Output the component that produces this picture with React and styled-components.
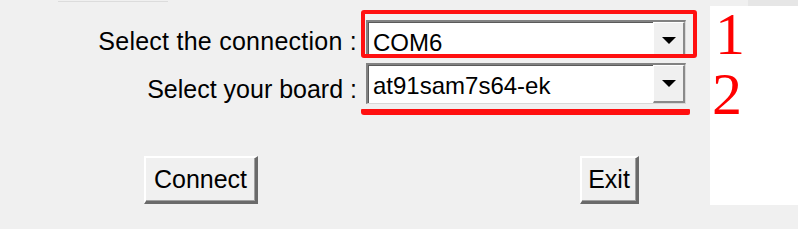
import React from 'react';
import styled, { createGlobalStyle } from 'styled-components';

const Global = createGlobalStyle`
    html, body { margin: 0; padding: 0; background: #f0f0f0; }
    body { width: 798px; height: 229px; overflow: hidden; }
`

const Screen = styled.div`
    display: flex;
    width: 798px;
    height: 229px;
    background: #f0f0f0;
    font-family: "Liberation Sans", Arial, sans-serif;
    color: #000;
`

const Dialog = styled.div`
    width: 710px;
    display: flex;
    flex-direction: column;
    position: relative;
    .topline{
        position: absolute;
        left: 58px;
        top: 1px;
        width: 110px;
        height: 1px;
        background: #dcdcdc;
    }
`

const Row = styled.div`
    display: grid;
    grid-template-columns: 357px auto;
    align-items: center;
    margin-top: ${props => props.top}px;
`

const Label = styled.label`
    font-size: 25px;
    text-align: right;
    letter-spacing: ${props => props.spacing || 0}px;
    padding-top: ${props => props.shift || 0}px;
`

const Highlight = styled.div`
    margin-left: 4px;
    width: 336px;
    height: 48px;
    box-sizing: border-box;
    border: 4px solid #ff1010;
    border-radius: 3px;
    padding: 6px 7px 0 1px;
    overflow: hidden;
`

const Field = styled.div`
    display: flex;
    flex-direction: column;
`

const Combo = styled.div`
    width: 320px;
    height: 41px;
    flex-shrink: 0;
    margin-left: ${props => props.offset || 0}px;
    box-sizing: border-box;
    display: flex;
    background: #fff;
    border-top: 2px solid #828282;
    border-left: 2px solid #828282;
    border-right: 1px solid #d8d8d8;
    border-bottom: 1px solid #d8d8d8;
    box-shadow: inset 1px 1px 0 #5a5a5a;
    .value{
        flex: 1;
        font-size: 24px;
        padding: 4px 0 0 5px;
        display: flex;
        align-items: center;
    }
`

const DropButton = styled.div`
    width: 32px;
    box-sizing: border-box;
    background: #f0f0f0;
    border-right: 2px solid #8a8a8a;
    border-bottom: 2px solid #8a8a8a;
    border-top: 1px solid #fff;
    border-left: 1px solid #fff;
    display: flex;
    align-items: center;
    justify-content: center;
    &::after{
        content: '';
        border-left: 7px solid transparent;
        border-right: 7px solid transparent;
        border-top: 7px solid #000;
        margin-left: 1px;
    }
`

const Underline = styled.div`
    margin-left: 4px;
    margin-top: 5px;
    width: 329px;
    height: 6px;
    background: #ff1010;
    border-radius: 1px 1px 2px 3px;
`

const Buttons = styled.div`
    display: flex;
    margin-top: 41px;
    padding-left: 144px;
`

const Button = styled.button`
    width: ${props => props.w}px;
    height: 48px;
    margin-left: ${props => props.gap || 0}px;
    box-sizing: border-box;
    background: #f0f0f0;
    font-family: "Liberation Sans", Arial, sans-serif;
    font-size: 25px;
    color: #000;
    padding: 0;
    border-top: 2px solid #fff;
    border-left: 2px solid #fff;
    border-right: 3px solid #6a6a6a;
    border-bottom: 3px solid #6a6a6a;
    box-shadow: inset -1px -1px 0 #a0a0a0;
`

const Side = styled.div`
    flex: 1;
    display: flex;
    flex-direction: column;
    .strip{
        height: 6px;
        margin-left: 38px;
        background: #e6e6e6;
    }
`

const Paper = styled.div`
    background: #fff;
    height: 199px;
    display: flex;
    flex-direction: column;
    padding-left: 2px;
`

const Mark = styled.span`
    font-family: "Liberation Serif", "Times New Roman", serif;
    font-size: 60px;
    line-height: 44px;
    color: #ff0000;
    margin-top: ${props => props.top}px;
    margin-left: ${props => props.left || 0}px;
`

const App = () => {
    return (
        <Screen>
            <Global />
            <Dialog>
                <span className="topline" />
                <Row top={10}>
                    <Label shift={14} spacing={0.25}>Select the connection :</Label>
                    <Highlight>
                        <Combo>
                            <span className="value">COM6</span>
                            <DropButton />
                        </Combo>
                    </Highlight>
                </Row>
                <Row top={5}>
                    <Label shift={1}>Select your board :</Label>
                    <Field>
                        <Combo offset={9}>
                            <span className="value">at91sam7s64-ek</span>
                            <DropButton />
                        </Combo>
                        <Underline />
                    </Field>
                </Row>
                <Buttons>
                    <Button w={114}>Connect</Button>
                    <Button w={59} gap={322}>Exit</Button>
                </Buttons>
            </Dialog>
            <Side>
                <div className="strip" />
                <Paper>
                    <Mark top={6} left={3}>1</Mark>
                    <Mark top={16}>2</Mark>
                </Paper>
            </Side>
        </Screen>
    )
}

export default App
